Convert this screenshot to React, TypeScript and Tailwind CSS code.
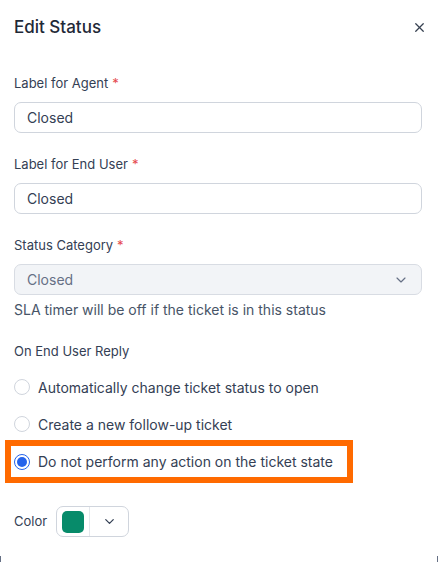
import { ChevronDown, X } from 'lucide-react';

function Label({ text, required }: { text: string; required?: boolean }) {
  return (
    <div className="text-[13px] leading-5 text-[#344054]">
      {text}
      {required && <span className="ml-1 text-[#e5484d]">*</span>}
    </div>
  );
}

function TextInput({ value }: { value: string }) {
  return (
    <div className="mt-[9px] h-[31px] rounded-[7px] border border-[#d0d5dd] bg-white px-3 flex items-center text-[14px] text-[#344054]">
      {value}
    </div>
  );
}

function Radio({ checked, label }: { checked?: boolean; label: string }) {
  return (
    <div className="flex items-center gap-2 h-5">
      {checked ? (
        <span className="w-4 h-4 rounded-full border border-[#2563eb] flex items-center justify-center">
          <span className="w-[10px] h-[10px] rounded-full bg-[#2563eb]" />
        </span>
      ) : (
        <span className="w-4 h-4 rounded-full border border-[#d0d5dd] bg-white" />
      )}
      <span className="text-[14px] text-[#344054]">{label}</span>
    </div>
  );
}

export default function App() {
  return (
    <div className="w-[439px] h-[562px] bg-white relative overflow-hidden" style={{ fontFamily: 'Inter, "Noto Sans", sans-serif' }}>
      <div className="flex items-center justify-between pl-[14px] pr-[12px] pt-[16px] h-[38px]">
        <h2 className="text-[17px] font-medium text-[#1f2937] leading-6">Edit Status</h2>
        <X size={15} strokeWidth={2} className="text-[#374151]" />
      </div>

      <div className="px-[14px] pr-[17px] pt-[35px]">
        <Label text="Label for Agent" required />
        <TextInput value="Closed" />

        <div className="mt-[21px]">
          <Label text="Label for End User" required />
          <TextInput value="Closed" />
        </div>

        <div className="mt-[21px]">
          <Label text="Status Category" required />
          <div className="mt-[9px] h-[31px] rounded-[7px] border border-[#d8dce3] bg-[#f2f4f7] pl-3 pr-[12px] flex items-center justify-between text-[14px] text-[#667085]">
            <span>Closed</span>
            <ChevronDown size={16} strokeWidth={1.75} className="text-[#667085]" />
          </div>
          <div className="mt-[5px] text-[14px] leading-5 text-[#475467]">
            SLA timer will be off if the ticket is in this status
          </div>
        </div>

        <div className="mt-[21px]">
          <Label text="On End User Reply" />
          <div className="mt-[16px] flex flex-col gap-[17px]">
            <Radio label="Automatically change ticket status to open" />
            <Radio label="Create a new follow-up ticket" />
          </div>
          <div className="-ml-[9px] mt-[6px] w-[348px] h-[43px] border-[6px] border-[#ff6a00] pl-[3px] flex items-center">
            <Radio checked label="Do not perform any action on the ticket state" />
          </div>
        </div>

        <div className="mt-[23px] flex items-center gap-[9px]">
          <span className="text-[13px] text-[#344054]">Color</span>
          <div className="h-[31px] w-[73px] rounded-[7px] border border-[#d0d5dd] flex items-center">
            <div className="pl-[5px] pr-[5px] h-full flex items-center border-r border-[#e4e7ec]">
              <span className="w-[22px] h-[22px] rounded-[5px] bg-[#078b6a]" />
            </div>
            <div className="flex-1 flex items-center justify-center">
              <ChevronDown size={15} strokeWidth={2} className="text-[#344054]" />
            </div>
          </div>
        </div>
      </div>

      <div className="absolute bottom-0 left-0 h-[6px] w-[438px] border-l border-r border-[#667085]" />
    </div>
  );
}
